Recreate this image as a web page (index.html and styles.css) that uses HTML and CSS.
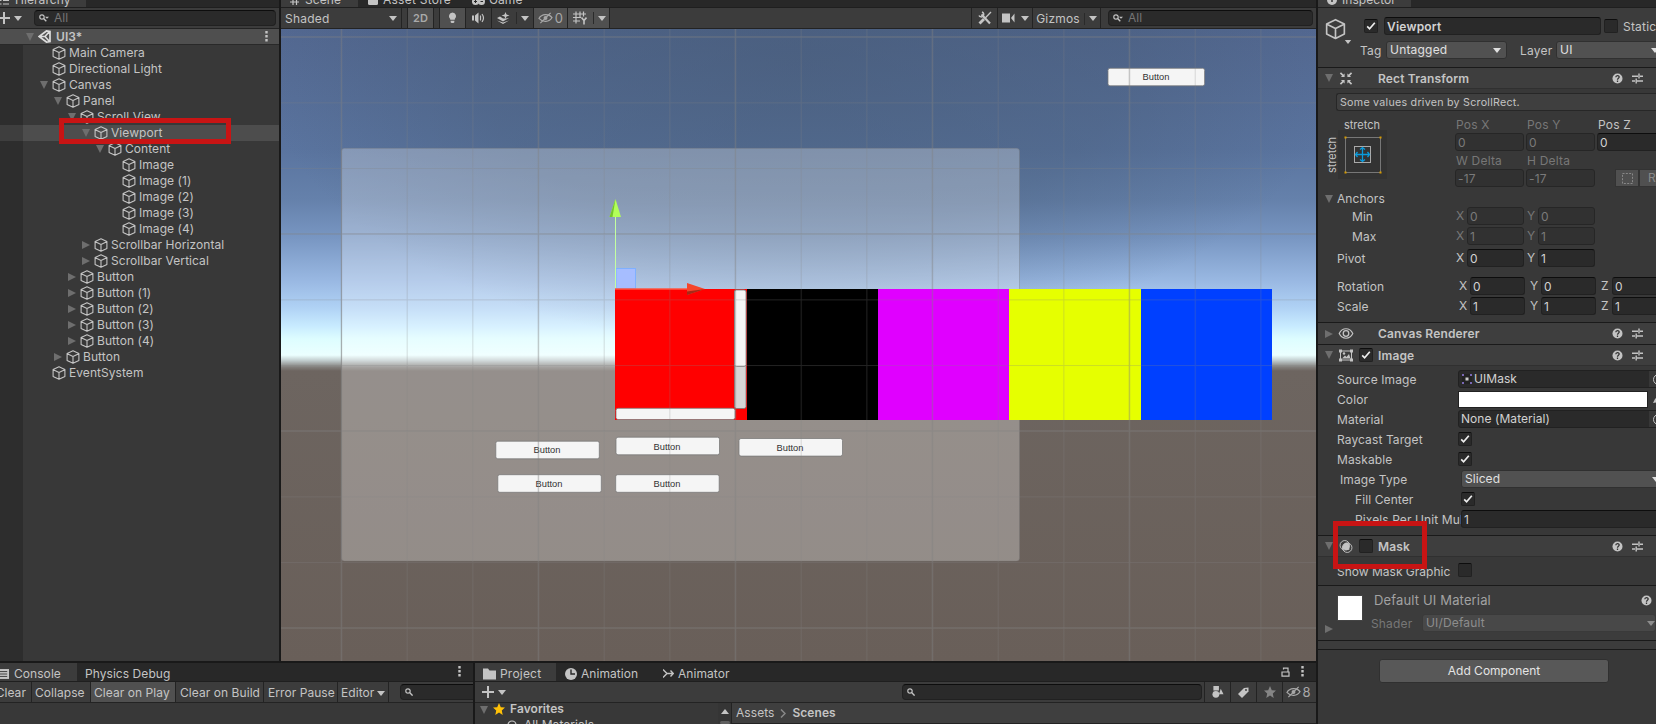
FILE: index.html
```html
<!DOCTYPE html>
<html lang="en">
<head>
<meta charset="utf-8">
<title>UI3 - Editor</title>
<link rel="stylesheet" href="styles.css">
</head>
<body>
<svg class="sprite" aria-hidden="true">
  <symbol id="cube" viewBox="0 0 14 14"><path d="M7 .8 12.9 3.6V10.4L7 13.3 1.1 10.4V3.6ZM1.3 3.8 7 6.6 12.7 3.8M7 6.6V13" fill="none" stroke="currentColor" stroke-width="1.1" stroke-linejoin="round"/></symbol>
  <symbol id="down" viewBox="0 0 8 8"><path d="M0 0H8L4 8Z" fill="currentColor"/></symbol>
  <symbol id="right" viewBox="0 0 8 8"><path d="M0 0V8L8 4Z" fill="currentColor"/></symbol>
  <symbol id="caret" viewBox="0 0 8 5"><path d="M0 0H8L4 5Z" fill="currentColor"/></symbol>
  <symbol id="dots" viewBox="0 0 3 11"><path d="M.3 0h2.4v2.4H.3ZM.3 4h2.4v2.4H.3ZM.3 8h2.4v2.4H.3Z" fill="currentColor"/></symbol>
  <symbol id="lock" viewBox="0 0 9 10"><path d="M1 5H8V9.2H1ZM7 5V1.2H2.5V2.5" fill="none" stroke="currentColor" stroke-width="1.2"/></symbol>
  <symbol id="plus" viewBox="0 0 12 12"><path d="M6 0V12M0 6H12" stroke="currentColor" stroke-width="2"/></symbol>
  <symbol id="find" viewBox="0 0 8 8"><circle cx="3" cy="3" r="2.2" fill="none" stroke="currentColor" stroke-width="1.2"/><path d="M4.6 4.6 7.6 7.6" stroke="currentColor" stroke-width="1.4"/></symbol>
  <symbol id="findm" viewBox="0 0 10 8"><circle cx="3" cy="3" r="2.2" fill="none" stroke="currentColor" stroke-width="1.2"/><path d="M4.6 4.6 7.3 7.3" stroke="currentColor" stroke-width="1.4"/><path d="M6 2.8H10L8 4.8Z" fill="currentColor"/></symbol>
  <symbol id="check" viewBox="0 0 10 10"><path d="M1.2 5.4 3.6 7.8 8.8 1.8" fill="none" stroke="currentColor" stroke-width="1.7"/></symbol>
  <symbol id="help" viewBox="0 0 11 11"><circle cx="5.5" cy="5.5" r="5" fill="#c4c4c4"/><path d="M3.8 4.3C3.8 2 7.2 2 7.2 4.1 7.2 5.3 5.5 5.3 5.5 6.8M5.5 7.6V8.9" fill="none" stroke="#333" stroke-width="1.3"/></symbol>
  <symbol id="preset" viewBox="0 0 11 11"><path d="M0 3.2H6M8 3.2H11M7 .5V5.6M0 8H3M5 8H11M4.2 5.4V10.6" fill="none" stroke="currentColor" stroke-width="1.4"/></symbol>
  <symbol id="hidden" viewBox="0 0 16 12"><path d="M1 6.5C4 1.5 11.500 1.200 15 5.500 12 10.500 5 11 1 6.500Z" fill="none" stroke="currentColor" stroke-width="1.3"/><circle cx="8" cy="6" r="2.1" fill="currentColor"/><path d="M2.500 11.500 13.500 .5" stroke="currentColor" stroke-width="1.300"/></symbol>
</svg>

<div class="editor">
  <div class="left">
    <div class="top">
      <section class="hierarchy">
        <div class="tabs cut">
          <div class="tab on h-tab"><svg class="i9" viewBox="0 0 9 10"><path d="M0 5.500H1.500M3 5.500H9M3 9H9M0 9H1.500" stroke="currentColor" stroke-width="1.200"/></svg><span>Hierarchy</span></div>
          <div class="tab-tools"><svg class="lock"><use href="#lock"/></svg><svg class="dots"><use href="#dots"/></svg></div>
        </div>
        <div class="bar h-bar"><svg class="plus"><use href="#plus"/></svg><svg class="caret"><use href="#caret"/></svg><div class="search"><svg class="findm"><use href="#findm"/></svg><span>All</span></div></div>
        <div class="scene-row"><svg class="fold"><use href="#down"/></svg><svg class="logo" viewBox="0 0 13 13"><path d="M12 1.500V11.500L8.500 12 1 6.500 8.500 1ZM1.500 6.500H7L11.500 1.500M7 6.500 11.500 11.500" fill="none" stroke="currentColor" stroke-width="1.700"/></svg><b>UI3*</b><svg class="dots"><use href="#dots"/></svg></div>
        <div class="tree">
          <div class="node d1"><i class="fold"></i><svg class="cube"><use href="#cube"/></svg>Main Camera</div>
          <div class="node d1"><i class="fold"></i><svg class="cube"><use href="#cube"/></svg>Directional Light</div>
          <div class="node d1"><svg class="fold"><use href="#down"/></svg><svg class="cube"><use href="#cube"/></svg>Canvas</div>
          <div class="node d2"><svg class="fold"><use href="#down"/></svg><svg class="cube"><use href="#cube"/></svg>Panel</div>
          <div class="node d3"><svg class="fold"><use href="#down"/></svg><svg class="cube"><use href="#cube"/></svg>Scroll View</div>
          <div class="node d4 sel"><svg class="fold"><use href="#down"/></svg><svg class="cube"><use href="#cube"/></svg>Viewport<span class="mark mark-node"></span></div>
          <div class="node d5"><svg class="fold"><use href="#down"/></svg><svg class="cube"><use href="#cube"/></svg>Content</div>
          <div class="node d6"><i class="fold"></i><svg class="cube"><use href="#cube"/></svg>Image</div>
          <div class="node d6"><i class="fold"></i><svg class="cube"><use href="#cube"/></svg>Image (1)</div>
          <div class="node d6"><i class="fold"></i><svg class="cube"><use href="#cube"/></svg>Image (2)</div>
          <div class="node d6"><i class="fold"></i><svg class="cube"><use href="#cube"/></svg>Image (3)</div>
          <div class="node d6"><i class="fold"></i><svg class="cube"><use href="#cube"/></svg>Image (4)</div>
          <div class="node d4"><svg class="fold"><use href="#right"/></svg><svg class="cube"><use href="#cube"/></svg>Scrollbar Horizontal</div>
          <div class="node d4"><svg class="fold"><use href="#right"/></svg><svg class="cube"><use href="#cube"/></svg>Scrollbar Vertical</div>
          <div class="node d3"><svg class="fold"><use href="#right"/></svg><svg class="cube"><use href="#cube"/></svg>Button</div>
          <div class="node d3"><svg class="fold"><use href="#right"/></svg><svg class="cube"><use href="#cube"/></svg>Button (1)</div>
          <div class="node d3"><svg class="fold"><use href="#right"/></svg><svg class="cube"><use href="#cube"/></svg>Button (2)</div>
          <div class="node d3"><svg class="fold"><use href="#right"/></svg><svg class="cube"><use href="#cube"/></svg>Button (3)</div>
          <div class="node d3"><svg class="fold"><use href="#right"/></svg><svg class="cube"><use href="#cube"/></svg>Button (4)</div>
          <div class="node d2"><svg class="fold"><use href="#right"/></svg><svg class="cube"><use href="#cube"/></svg>Button</div>
          <div class="node d1"><i class="fold"></i><svg class="cube"><use href="#cube"/></svg>EventSystem</div>
        </div>
      </section>

      <section class="scene">
        <div class="tabs cut">
          <div class="tab on s-tab"><svg class="i9" viewBox="0 0 9 10"><path d="M3 0V10M6.500 0V10M0 3H9M0 7H9" stroke="currentColor" stroke-width="1.200"/></svg><span>Scene</span></div>
          <div class="tab a-tab"><svg class="i10" viewBox="0 0 10 10"><rect width="10" height="10" rx="1.500" fill="currentColor"/></svg><span>Asset Store</span></div>
          <div class="tab g-tab"><svg class="i13" viewBox="0 0 13 10"><path d="M3.500 6.500H9.500" stroke="currentColor" stroke-width="4"/><circle cx="3.500" cy="6.500" r="3.500" fill="currentColor"/><circle cx="9.500" cy="6.500" r="3.500" fill="currentColor"/><path d="M3.500 5V8M2 6.500H5M8.500 6.500H11" stroke="#282828"/></svg><span>Game</span></div>
          <div class="tab-tools"><svg class="dots"><use href="#dots"/></svg></div>
        </div>
        <div class="bar s-bar">
          <div class="c shaded"><span>Shaded</span><svg class="caret"><use href="#caret"/></svg></div>
          <div class="c gap1"></div>
          <div class="c lit w26 two">2D</div>
          <div class="c gap1"></div>
          <div class="c lit w26"><svg class="i13" viewBox="0 0 13 13"><path d="M6.500 .5A4 4 0 0 1 9 7.500V8.500H4V7.500A4 4 0 0 1 6.500 .5ZM4.500 9.500H8.500V11L7.500 12H5.500L4.500 11Z" fill="currentColor"/></svg></div>
          <div class="c w26"><svg class="i13" viewBox="0 0 13 11"><path d="M0 3H2V8H0ZM3 3 6.500 0V11L3 8Z" fill="currentColor"/><path d="M8.500 3V8M10 1.500Q13 5.500 10 9.500" fill="none" stroke="currentColor" stroke-width="1.200"/></svg></div>
          <div class="c fx"><svg class="i13" viewBox="0 0 13 12"><path d="M0 6 3 4.500 6 6.500 9 6.500 12 6 6 9.500ZM0 8.500 6 10.500 12 8.500 6 12Z" fill="currentColor"/><path d="M8.500 0 9.500 2.500 12.500 3.500 9.500 4.500 8.500 7 7.500 4.500 4.500 3.500 7.500 2.500Z" fill="currentColor"/></svg><i></i><svg class="caret"><use href="#caret"/></svg></div>
          <div class="c lit eye"><svg class="hid"><use href="#hidden"/></svg><span>0</span></div>
          <div class="c lit fx grid-b"><svg class="i14" viewBox="0 0 14 13"><path d="M3 0V12M7 0V6M10.500 0V5M0 2.500H13M0 6H8M0 9.500H7" stroke="currentColor" stroke-width="1.200"/><path d="M8.500 6 11 9 13.500 6M11 9V13" fill="none" stroke="currentColor" stroke-width="1.600"/></svg><i></i><svg class="caret"><use href="#caret"/></svg></div>
          <div class="grow"></div>
          <div class="c tools"><svg class="i14" viewBox="0 0 14 14"><path d="M3.500 3.500 12 12.500" stroke="currentColor" stroke-width="2.200"/><path d="M1 4.500A2.500 2.500 0 1 0 4 1" fill="none" stroke="currentColor" stroke-width="1.500"/><path d="M13 1 7 7.300" stroke="currentColor" stroke-width="1.300"/><path d="M6 8 1.500 12.500" stroke="currentColor" stroke-width="2.800"/></svg></div>
          <div class="c cam"><svg class="i13" viewBox="0 0 13 9"><path d="M0 0H8V9H0ZM9 4.500 12.500 0V9Z" fill="currentColor"/></svg><svg class="caret"><use href="#caret"/></svg></div>
          <div class="c giz"><span>Gizmos</span><i></i><svg class="caret"><use href="#caret"/></svg></div>
          <div class="search"><svg class="findm"><use href="#findm"/></svg><span>All</span></div>
        </div>
        <svg class="view" viewBox="281 29 1035 632">
          <defs>
            <linearGradient id="sky" gradientUnits="userSpaceOnUse" x1="0" y1="29" x2="0" y2="661">
              <stop offset="0" stop-color="#536891"/><stop offset=".19" stop-color="#5a749f"/><stop offset=".27" stop-color="#6581ab"/><stop offset=".33" stop-color="#7896c2"/><stop offset=".4" stop-color="#9ab9e3"/><stop offset=".44" stop-color="#afd1f4"/><stop offset=".47" stop-color="#c8ebff"/><stop offset=".49" stop-color="#ddfdff"/><stop offset=".516" stop-color="#ebffff"/><stop offset=".524" stop-color="#c4d0d1"/><stop offset=".535" stop-color="#827f7c"/><stop offset=".541" stop-color="#6d6560"/><stop offset="1" stop-color="#695f59"/>
            </linearGradient>
            <radialGradient id="depth" gradientUnits="userSpaceOnUse" cx="0" cy="0" r="1" gradientTransform="translate(800 60) scale(540 290)"><stop offset="0" stop-color="#42566e" stop-opacity=".5"/><stop offset=".6" stop-color="#42566e" stop-opacity=".32"/><stop offset="1" stop-color="#42566e" stop-opacity="0"/></radialGradient>
            <pattern id="gthin" patternUnits="userSpaceOnUse" x="341" y="36.700" width="65.670" height="65.670"><path d="M.5 0V65.670M0 .5H65.670" stroke="#808080" stroke-opacity=".27"/></pattern>
            <pattern id="gbold" patternUnits="userSpaceOnUse" x="340.500" y="36" width="197" height="197"><path d="M.8 0V197M0 .8H197" stroke="#808080" stroke-opacity=".26" stroke-width="1.600"/></pattern>
          </defs>
          <rect x="281" y="29" width="1035" height="632" fill="url(#sky)"/>
          <rect x="281" y="29" width="1035" height="332" fill="url(#depth)"/>
          <rect x="341.500" y="148.300" width="678" height="412.700" rx="3" fill="#fff" fill-opacity=".28" stroke="#777" stroke-opacity=".35"/>
          <rect x="616" y="268.500" width="19.500" height="20" fill="#a6bdff" stroke="#7fb0ff"/>
          <g shape-rendering="crispEdges">
            <rect x="615" y="289" width="132" height="131" fill="#f00"/><rect x="747" y="289" width="131" height="131"/><rect x="878" y="289" width="131" height="131" fill="#e000ff"/><rect x="1009" y="289" width="132" height="131" fill="#e6ff00"/><rect x="1141" y="289" width="131" height="131" fill="#0040ff"/>
          </g>
          <g stroke="#777" stroke-opacity=".75" fill="#f5f5f5">
            <rect x="734.500" y="290" width="11.500" height="118.500" rx="2" fill="#d6d6d6"/><rect x="734.500" y="290" width="11.500" height="76.500" rx="2"/>
            <rect x="616" y="408.300" width="119" height="11.200" rx="2"/>
            <rect x="1108" y="68.300" width="96.600" height="17.500" rx="2"/>
            <rect x="495.800" y="441.200" width="103.500" height="17.600" rx="2"/><rect x="616" y="437.200" width="103.500" height="17.600" rx="2"/><rect x="739" y="438.500" width="103.500" height="17.600" rx="2"/>
            <rect x="497.800" y="474.700" width="103.500" height="17.600" rx="2"/><rect x="615.700" y="474.700" width="103.500" height="17.600" rx="2"/>
          </g>
          <g class="ui-text"><text x="1156" y="80.300">Button</text><text x="547" y="453.300">Button</text><text x="667" y="449.600">Button</text><text x="790" y="451">Button</text><text x="549" y="487">Button</text><text x="667" y="487">Button</text></g>
          <rect x="281" y="29" width="1035" height="632" fill="url(#gthin)"/>
          <rect x="281" y="29" width="1035" height="632" fill="url(#gbold)"/>
          <path d="M615.500 217V288" stroke="#c3ffa0"/><path d="M615.500 199 621 217H609.500Z" fill="#b2ff59"/><path d="M609.500 217 615.500 199 612.500 217Z" fill="#74c52c"/>
          <path d="M615 289H687" stroke="#ff5640" stroke-width="1.500"/><path d="M687 283V295L705 289Z" fill="#f6452b"/><path d="M687 291.500V295L705 289Z" fill="#a52a18"/>
        </svg>
      </section>
    </div>

    <div class="bottom">
      <section class="console">
        <div class="tabs"><div class="tab on c-tab"><svg class="i10" viewBox="0 0 10 11"><path d="M0 0H10V11H0Z" fill="currentColor"/><path d="M0 2.800H8M0 5.500H8M0 8.200H8" stroke="#333"/></svg><span>Console</span></div><div class="tab p-tab">Physics Debug</div><div class="tab-tools"><svg class="dots"><use href="#dots"/></svg></div></div>
        <div class="bar c-bar"><div class="c clr">Clear</div><div class="c col">Collapse</div><div class="c cop lit">Clear on Play</div><div class="c cob">Clear on Build</div><div class="c err">Error Pause</div><div class="c edt">Editor<svg class="caret"><use href="#caret"/></svg></div><div class="search"><svg class="find"><use href="#find"/></svg></div></div>
      </section>
      <section class="project">
        <div class="tabs"><div class="tab on pr-tab"><svg class="i13" viewBox="0 0 13 11"><path d="M0 0H5L6.500 2H13V11H0Z" fill="currentColor"/></svg><span>Project</span></div><div class="tab an-tab"><svg class="i12" viewBox="0 0 12 12"><circle cx="6" cy="6" r="6" fill="currentColor"/><path d="M6 1.500V6H10" fill="none" stroke="#282828" stroke-width="1.400"/></svg><span>Animation</span></div><div class="tab am-tab"><svg class="i11" viewBox="0 0 11 10"><path d="M0 1 4 5H10M0 9 4 5M7.500 2 10.300 5 7.500 8" fill="none" stroke="currentColor" stroke-width="1.400"/></svg><span>Animator</span></div><div class="tab-tools"><svg class="lock"><use href="#lock"/></svg><svg class="dots"><use href="#dots"/></svg></div></div>
        <div class="bar p-bar"><svg class="plus"><use href="#plus"/></svg><svg class="caret"><use href="#caret"/></svg><div class="search"><svg class="find"><use href="#find"/></svg></div>
          <div class="c w26"><svg class="i12" viewBox="0 0 12 13"><path d="M1 0H7V5H1ZM9 3 12 9H7Z" fill="currentColor"/><circle cx="3.700" cy="9" r="3.700" fill="currentColor"/></svg></div><div class="c w26"><svg class="i11" viewBox="0 0 11 11"><path d="M6 1 10.500 .5 10.500 4.500 4 11 0 7Z" fill="currentColor"/><circle cx="8" cy="3" r=".9" fill="#333"/></svg></div><div class="c w26 dim"><svg class="i12" viewBox="0 0 12 12"><path d="M6 0 7.800 4.200 12 4.600 8.800 7.500 9.700 12 6 9.500 2.300 12 3.200 7.500 0 4.600 4.200 4.200Z" fill="currentColor"/></svg></div><div class="c hid8"><svg class="hid"><use href="#hidden"/></svg><span>8</span></div></div>
        <div class="p-body"><div class="favs"><div class="fav-list"><div class="fav"><svg class="fold"><use href="#down"/></svg><svg class="star" viewBox="0 0 12 12"><path d="M6 0 7.800 4.200 12 4.600 8.800 7.500 9.700 12 6 9.500 2.300 12 3.200 7.500 0 4.600 4.200 4.200Z" fill="#ffc107"/></svg><b>Favorites</b></div><div class="fav sub"><svg class="i10" viewBox="0 0 10 10"><circle cx="5" cy="5" r="4" fill="none" stroke="currentColor" stroke-width="1.200"/></svg><span>All Materials</span></div></div><div class="scroll"><svg class="up" viewBox="0 0 8 5"><path d="M0 5H8L4 0Z" fill="currentColor"/></svg><i></i></div></div>
          <div class="crumbs"><span>Assets</span><svg class="chev" viewBox="0 0 6 9"><path d="M1 .5 5 4.500 1 8.500" fill="none" stroke="currentColor" stroke-width="1.500"/></svg><b>Scenes</b></div></div>
      </section>
    </div>
  </div>

  <aside class="inspector">
    <div class="tabs cut"><div class="tab on in-tab"><svg class="i10" viewBox="0 0 10 10"><circle cx="5" cy="5" r="5" fill="currentColor"/><path d="M5 2V7" stroke="#333" stroke-width="1.500"/></svg><span>Inspector</span></div><div class="tab-tools"><svg class="lock"><use href="#lock"/></svg></div></div>
    <div class="object">
      <div class="obj-icon"><svg class="bigcube"><use href="#cube"/></svg><svg class="caret"><use href="#caret"/></svg></div>
      <div class="obj-main">
        <div class="obj-row"><span class="box"><svg><use href="#check"/></svg></span><span class="field name"><b>Viewport</b></span><span class="box"></span><span class="static">Static</span></div>
        <div class="obj-row two-row"><span class="tag">Tag</span><span class="drop tagd">Untagged<svg class="caret"><use href="#caret"/></svg></span><span class="layer">Layer</span><span class="drop layd">UI<svg class="caret"><use href="#caret"/></svg></span></div>
      </div>
    </div>

    <div class="head"><svg class="fold"><use href="#down"/></svg><svg class="hi" viewBox="0 0 14 14"><path d="M1 1 4 4M13 1 10 4M1 13 4 10M13 13 10 10" stroke="currentColor" stroke-width="1.800"/><path d="M5.500 1.500V5.500H1.500ZM8.500 1.500V5.500H12.500ZM5.500 12.500V8.500H1.500ZM8.500 12.500V8.500H12.500Z" fill="currentColor"/></svg><b>Rect Transform</b><svg class="help"><use href="#help"/></svg><svg class="preset"><use href="#preset"/></svg></div>
    <div class="note">Some values driven by ScrollRect.</div>
    <div class="rect">
      <div class="anchor"><span class="st-top">stretch</span><span class="st-side">stretch</span>
        <svg class="anchor-box" viewBox="0 0 49 49"><rect width="49" height="49" fill="#333"/><rect x="7.500" y="7.500" width="35" height="35" fill="none" stroke="#777"/><rect x="16.500" y="16.500" width="16" height="16" fill="none" stroke="#aaa"/><path d="M18 24.500H31M24.500 18V31M19.500 22 17.500 24.500 19.500 27M29.500 22 31.500 24.500 29.500 27M22 19.500 24.500 17.500 27 19.500M22 29.500 24.500 31.500 27 29.500" fill="none" stroke="#0a9bdc" stroke-width="1.300"/><path d="M6.500 6.500h2v2h-2ZM41.500 6.500h2v2h-2ZM6.500 41.500h2v2h-2ZM41.500 41.500h2v2h-2Z" fill="#d89b00"/></svg>
      </div>
      <div class="pos">
        <span class="off">Pos X</span><span class="off">Pos Y</span><span class="pz">Pos Z</span>
        <span class="field dis">0</span><span class="field dis">0</span><span class="field">0</span>
        <span class="off">W Delta</span><span class="off">H Delta</span><span></span>
        <span class="field dis">-17</span><span class="field dis">-17</span>
        <span class="modes"><span class="m1"><svg viewBox="0 0 11 11"><path d="M.5 .5H10.500V10.500H.5Z" fill="none" stroke="currentColor" stroke-dasharray="2 1.330"/></svg></span><span class="m2">R</span></span>
      </div>
    </div>
    <div class="line anchors"><svg class="fold"><use href="#down"/></svg>Anchors</div>
    <div class="line ind"><span class="lab">Min</span><div class="xy off"><span>X</span><span class="field dis">0</span><span>Y</span><span class="field dis">0</span></div></div>
    <div class="line ind"><span class="lab">Max</span><div class="xy off"><span>X</span><span class="field dis">1</span><span>Y</span><span class="field dis">1</span></div></div>
    <div class="line pivot"><span class="lab">Pivot</span><div class="xy"><span>X</span><span class="field">0</span><span>Y</span><span class="field">1</span></div></div>
    <div class="line rot"><span class="lab">Rotation</span><div class="xyz"><span>X</span><span class="field">0</span><span>Y</span><span class="field">0</span><span>Z</span><span class="field">0</span></div></div>
    <div class="line scl"><span class="lab">Scale</span><div class="xyz"><span>X</span><span class="field">1</span><span>Y</span><span class="field">1</span><span>Z</span><span class="field">1</span></div></div>

    <div class="head closed"><svg class="fold"><use href="#right"/></svg><svg class="hi wide" viewBox="0 0 16 14"><path d="M.7 7C4 .2 12 .2 15.300 7 12 13.800 4 13.800 .7 7Z" fill="none" stroke="currentColor" stroke-width="1.300"/><circle cx="8" cy="7" r="3" fill="none" stroke="currentColor" stroke-width="1.400"/></svg><b>Canvas Renderer</b><svg class="help"><use href="#help"/></svg><svg class="preset"><use href="#preset"/></svg></div>
    <div class="head"><svg class="fold"><use href="#down"/></svg><svg class="hi" viewBox="0 0 14 12"><path d="M1.500 1.500H12.500V10.500H1.500Z" fill="none" stroke="currentColor"/><path d="M0 0H3V3H0ZM11 0H14V3H11ZM0 9H3V12H0ZM11 9H14V12H11ZM3 9 6 6 7.500 7.500 10 4.500 11.500 9Z" fill="currentColor"/><circle cx="5" cy="4" r="1.200" fill="currentColor"/></svg><span class="box"><svg><use href="#check"/></svg></span><b>Image</b><svg class="help"><use href="#help"/></svg><svg class="preset"><use href="#preset"/></svg></div>
    <div class="props">
      <div class="prop"><span class="lab">Source Image</span><span class="obj"><svg class="mini" viewBox="0 0 10 10"><rect width="10" height="10" fill="#222"/><path d="M0 0H2V2H0ZM8 0H10V2H8ZM0 8H2V10H0ZM8 8H10V10H8Z" fill="#7a68b5"/><path d="M3.500 3.500H6.500V6.500H3.500Z" fill="#ccc"/></svg>UIMask<i class="pick"></i></span></div>
      <div class="prop"><span class="lab">Color</span><span class="white"></span><svg class="drop-ic" viewBox="0 0 8 8"><path d="M0 8 2 4 5 1 8 4 5 7Z" fill="currentColor"/></svg></div>
      <div class="prop"><span class="lab">Material</span><span class="obj none">None (Material)<i class="pick"></i></span></div>
      <div class="prop"><span class="lab">Raycast Target</span><span class="box"><svg><use href="#check"/></svg></span></div>
      <div class="prop"><span class="lab">Maskable</span><span class="box"><svg><use href="#check"/></svg></span></div>
      <div class="prop p1"><span class="lab">Image Type</span><span class="drop sliced">Sliced<svg class="caret"><use href="#caret"/></svg></span></div>
      <div class="prop p2"><span class="lab">Fill Center</span><span class="box"><svg><use href="#check"/></svg></span></div>
      <div class="prop p2"><span class="lab">Pixels Per Unit Mul</span><span class="field ppu">1</span></div>
    </div>
    <div class="head mask"><span class="mark mark-mask"></span><svg class="fold"><use href="#down"/></svg><svg class="hi" viewBox="0 0 14 14"><circle cx="5.700" cy="5.700" r="5.100" fill="none" stroke="currentColor"/><circle cx="8.300" cy="8.300" r="5.100" fill="none" stroke="currentColor"/><path d="M3.400 9.800A5 5 0 0 1 9.800 3.400Q11.500 6 10.600 10.600 6 11.500 3.400 9.800Z" fill="currentColor"/></svg><span class="box"></span><b>Mask</b><svg class="help"><use href="#help"/></svg><svg class="preset"><use href="#preset"/></svg></div>
    <div class="prop show"><span class="lab">Show Mask Graphic</span><span class="box"></span></div>
    <div class="material">
      <div class="mat-left"><span class="swatch"></span><svg class="fold"><use href="#right"/></svg></div>
      <div class="mat-main"><div class="mat-title"><span>Default UI Material</span><svg class="help"><use href="#help"/></svg></div><div class="mat-sh"><span>Shader</span><span class="drop">UI/Default<svg class="caret"><use href="#caret"/></svg></span></div></div>
    </div>
    <div class="strip"></div>
    <div class="add"><button>Add Component</button></div>
  </aside>
</div>
</body>
</html>
```

FILE: styles.css
```css
* { box-sizing: border-box; }
body { margin: 0; width: 1656px; height: 724px; overflow: hidden; background: #191919; color: #c4c4c4; font: 12px/14px Inter, "Liberation Sans", sans-serif; letter-spacing: .06px; white-space: nowrap; }
svg { display: block; flex: none; }
b { font-weight: 600; }
.sprite { display: none; }
.editor { display: flex; gap: 2px; width: 1656px; height: 724px; }
.left { width: 1316px; flex: none; display: flex; flex-direction: column; gap: 2px; }
.top { display: flex; gap: 2px; height: 661px; }
.bottom { display: flex; gap: 2px; height: 61px; }
section, aside { overflow: hidden; background: #383838; flex: none; }

/* icon sizes */
.i9 { width: 9px; height: 10px; } .i10 { width: 10px; height: 10px; } .i11 { width: 11px; height: 11px; } .i12 { width: 12px; height: 12px; } .i13 { width: 13px; height: 12px; } .i14 { width: 14px; height: 14px; }
.caret { width: 8px; height: 5px; } .dots { width: 3px; height: 11px; } .lock { width: 9px; height: 10px; } .plus { width: 12px; height: 12px; }
.find { width: 8px; height: 8px; } .findm { width: 10px; height: 8px; } .cube { width: 14px; height: 14px; } .fold { width: 8px; height: 8px; color: #6e6e6e; flex: none; } .hid { width: 15px; height: 12px; }

/* tabs */
.tabs { display: flex; height: 19px; background: #282828; border-bottom: 1px solid #1f1f1f; align-items: flex-end; }
.tabs.cut { height: 8px; overflow: hidden; }
.tab { height: 19px; padding-top: 4px; display: flex; align-items: center; flex: none; }
.cut .tab { height: 15px; padding-top: 0; }
.tab.on { background: #3c3c3c; }
.tab-tools { margin-left: auto; display: flex; align-items: center; height: 19px; }
.h-tab { width: 86px; gap: 6px; } .s-tab { width: 77px; padding-left: 9px; gap: 6px; } .a-tab { width: 104px; padding-left: 10px; gap: 5px; letter-spacing: .25px; } .g-tab { padding-left: 10px; gap: 4px; }
.in-tab { width: 93px; padding-left: 9px; gap: 5px; }
.cut .tab-tools { padding-bottom: 7px; }
.hierarchy .tab-tools { gap: 11px; padding-right: 12px; }
.scene .tab-tools { padding-right: 12px; }
.inspector .tab-tools { padding-right: 10px; }
.c-tab { width: 77px; gap: 5px; } .c-tab svg { width: 9px; }
.p-tab { padding-left: 8px; }
.console .tab-tools { padding-right: 12px; }
.pr-tab { width: 81px; padding-left: 8px; gap: 4px; letter-spacing: .2px; } .an-tab { width: 107px; padding-left: 9px; gap: 4px; } .am-tab { gap: 4px; }
.project .tab-tools { gap: 11px; padding-right: 12px; }

/* toolbars */
.bar { display: flex; height: 21px; align-items: center; background: #3c3c3c; border-bottom: 1px solid #232323; }
.search { height: 16px; background: #2a2a2a; border: 1px solid #212121; border-top-color: #0d0d0d; border-radius: 4px; display: flex; align-items: center; padding-left: 4px; gap: 5px; color: #c4c4c4; }
.search span { color: #757575; }
.c { height: 20px; display: flex; align-items: center; justify-content: center; border-right: 1px solid #232323; flex: none; }
.lit { background: #505050; }
.grow { flex: 1; }
.w26 { width: 26px; }
.h-bar .caret { margin: 0 12px 0 4px; } .h-bar .plus { margin-left: -2px; } .h-bar .search { width: 242px; }
.shaded { width: 121px; justify-content: space-between; padding: 1px 4px 0; letter-spacing: .2px; }
.gap1 { width: 6px; } .two { font-size: 11px; font-weight: 600; color: #aaa; letter-spacing: 0; }
.fx { width: 42px; justify-content: flex-start; padding-left: 5px; } .fx i { width: 1px; height: 12px; background: #2a2a2a; margin: 0 4px 0 6px; }
.eye { width: 34px; gap: 2px; color: #a8a8a8; font-size: 13px; }
.tools { border-left: 1px solid #232323; width: 27px; }
.cam { width: 35px; gap: 6px; } .giz { width: 68px; gap: 4px; padding-top: 1px; letter-spacing: .2px; } .giz i { width: 1px; height: 12px; background: #2a2a2a; }
.s-bar .search { width: 205px; margin: 0 3px 0 7px; }

/* hierarchy */
.hierarchy { width: 279px; }
.scene-row { display: flex; align-items: center; height: 16px; padding: 0 11px 0 26px; background: #4f4f4f; border-bottom: 1px solid #292929; }
.scene-row .logo { width: 13px; height: 13px; margin: 0 5px 0 4px; color: #ddd; } .scene-row .dots { margin-left: auto; }
.tree { height: 616px; background: linear-gradient(90deg, #2d2d2d 23px, #383838 23px); }
.node { display: flex; align-items: center; height: 16px; position: relative; }
.node .cube { margin: 0 4px 0 4px; }
.d1 { padding-left: 40px; } .d2 { padding-left: 54px; } .d3 { padding-left: 68px; } .d4 { padding-left: 82px; } .d5 { padding-left: 96px; } .d6 { padding-left: 110px; }
.node .cube { margin-right: 3px; }
.sel { background: linear-gradient(90deg, #3e3e3e 23px, #4d4d4d 23px); z-index: 1; }
.mark { position: absolute; border: 5px solid #c81414; z-index: 5; }
.mark-node { left: 59px; top: -7px; width: 172px; height: 26px; }
.mark-mask { left: 15px; top: -15px; width: 94px; height: 48px; }

/* scene */
.scene { width: 1035px; }
.view { width: 1035px; height: 632px; }
.ui-text { font: 9.3px "Liberation Sans", sans-serif; letter-spacing: 0; text-anchor: middle; fill: #323232; }

/* console and project */
.console { width: 473px; }
.c-bar .c { justify-content: flex-start; padding: 2px 0 0 3px; }
.c-bar .clr { width: 32px; padding-right: 5px; justify-content: flex-end; } .c-bar .col { width: 59px; } .c-bar .cop { width: 85px; } .c-bar .cob { width: 88px; padding-left: 4px; } .c-bar .err { width: 74px; padding-left: 4px; } .c-bar .edt { width: 51px; gap: 3px; }
.c-bar .search { margin-left: 11px; flex: 1; border-radius: 4px 0 0 4px; border-right: 0; }
.project { width: 841px; }
.p-bar .plus { margin-left: 7px; } .p-bar .caret { margin-left: 4px; } .p-bar .search { margin-left: 396px; width: 300px; margin-right: 2px; }
.p-bar .search + .c { border-left: 1px solid #232323; width: 27px; }
.dim { color: #858585; } .p-bar .hid8 { border: 0; width: 33px; gap: 1px; font-size: 13px; color: #a8a8a8; padding-right: 2px; }
.p-body { display: flex; height: 21px; }
.favs { width: 257px; display: flex; border-right: 1px solid #232323; justify-content: space-between; }
.fav { display: flex; align-items: center; height: 16px; padding-left: 5px; margin-top: -2px; } .fav .fold { margin-top: 1px; }
.fav .star { width: 12px; height: 12px; margin: 0 5px; }
.fav.sub { margin-top: 0; padding-left: 32px; gap: 7px; }
.scroll { width: 13px; display: flex; flex-direction: column; align-items: center; background: #353535; padding-top: 6px; gap: 7px; } .scroll .up { width: 8px; height: 5px; } .scroll i { width: 10px; height: 10px; border-radius: 5px; background: #5f5f5f; }
.crumbs { flex: 1; height: 21px; border-bottom: 1px solid #232323; display: flex; align-items: center; background: #3f3f3f; padding-left: 4px; gap: 6px; } .chev { width: 6px; height: 9px; color: #888; }

/* inspector */
.inspector { width: 338px; height: 724px; }
.box { width: 14px; height: 14px; flex: none; background: #2a2a2a; border: 1px solid #212121; border-top-color: #0d0d0d; border-radius: 2px; display: flex; align-items: center; justify-content: center; color: #eee; }
.box svg { width: 10px; height: 10px; }
.field { height: 18px; flex: none; background: #2a2a2a; border: 1px solid #212121; border-top-color: #0d0d0d; border-radius: 3px; padding-left: 2px; line-height: 17px; color: #d2d2d2; }
.field.dis { background: #313131; border-color: #262626; color: #7a7a7a; }
.off { color: #777; }
.drop { height: 18px; flex: none; background: #515151; border: 1px solid #303030; border-radius: 3px; display: flex; align-items: center; justify-content: space-between; padding: 0 5px 0 3px; color: #e0e0e0; }
.object { display: flex; height: 59px; background: #3c3c3c; padding-top: 9px; }
.obj-icon { width: 46px; flex: none; padding: 1px 0 0 7px; } .bigcube { width: 21px; height: 22px; } .obj-icon .caret { margin: 0 0 0 19px; height: 4px; }
.obj-main { display: flex; flex: none; flex-direction: column; gap: 6px; }
.obj-row { display: flex; height: 18px; align-items: center; }
.name { width: 217px; margin: 0 3px 0 6px; line-height: 18px; letter-spacing: .2px; } .static { margin-left: 5px; padding-top: 1px; letter-spacing: .2px; }
.two-row { margin-left: -4px; letter-spacing: .2px; }
.tag { width: 26px; padding-top: 1px; } .tagd { width: 121px; } .layer { margin-left: 13px; width: 36px; padding-top: 1px; } .layd { width: 109px; }
.head { display: flex; align-items: center; height: 22px; background: #3e3e3e; border-top: 1px solid #1a1a1a; border-bottom: 1px solid #303030; padding-left: 7px; position: relative; }
.head .fold { margin-right: 6px; } .hi { width: 14px; height: 13px; margin-right: 6px; } .hi.wide { width: 16px; margin: 0 5px 0 -1px; }
.head .box { margin-right: -14px; } .head b { margin-left: 19px; padding-top: 1px; letter-spacing: .15px; }
.help { width: 11px; height: 11px; } .preset { width: 11px; height: 11px; }
.head .help { margin-left: auto; } .head .preset { margin: 0 13px 0 9px; }
.note { height: 18px; margin: 4px 0 0 18px; border: 1px solid #272727; border-right: 0; border-radius: 3px 0 0 3px; background: #3f3f3f; padding-left: 3px; font-size: 10.700px; line-height: 18px; letter-spacing: .25px; }
.rect { display: flex; height: 76px; margin-top: 6px; }
.anchor { width: 137px; flex: none; display: grid; grid-template: 13px 49px / 8px 49px; padding-left: 10px; column-gap: 3px; height: 62px; }
.st-top { grid-column: 2; font-size: 11px; text-align: center; line-height: 16px; letter-spacing: 0; margin-left: -3px; } .st-side { writing-mode: vertical-rl; transform: rotate(180deg); font-size: 11px; letter-spacing: 0; text-align: center; line-height: 8px; }
.anchor-box { width: 49px; height: 49px; margin-left: -1px; }
.pos { display: grid; flex: none; grid-template: 16px 18px 18px 18px / 69px 69px 70px; column-gap: 2px; letter-spacing: .2px; } .pos > .off, .pz { padding: 1px 0 0 1px; } .pos > .off:nth-of-type(n+7) { padding-top: 3px; }
.modes { display: flex; margin-left: 18px; color: #888; } .modes span { height: 18px; flex: none; background: #505050; border: 1px solid #333; display: flex; align-items: center; } .modes .m1 { width: 24px; justify-content: center; } .m1 svg { width: 11px; height: 11px; } .modes .m2 { width: 30px; padding-left: 8px; }
.line { display: flex; align-items: center; height: 20px; padding-left: 19px; }
.anchors { height: 14px; margin: -1px 0 0; padding-left: 7px; gap: 4px; }
.line .lab { width: 119px; flex: none; padding-top: 1px; } .line.ind { padding-left: 34px; } .line.ind .lab { width: 104px; }
.xy, .xyz { display: grid; align-items: center; } .xy { grid-template-columns: 11px 60px 11px 57px; } .xy .field:nth-child(2) { width: 57px; }
.xyz { grid-template-columns: 11px 60px 11px 60px 11px 55px; margin-left: 3px; } .xyz .field { width: 55px; }
.pivot { margin-top: 2px; } .rot { margin-top: 8px; } .scl { margin-bottom: 6px; }
.closed { border-bottom: 0; }
.props { padding-top: 3px; height: 169px; }
.prop { display: flex; align-items: center; height: 20px; padding-left: 19px; } .prop .lab { width: 121px; flex: none; padding-top: 1px; letter-spacing: .1px; }
.obj { width: 210px; flex: none; height: 18px; background: #2a2a2a; border: 1px solid #212121; border-radius: 3px; display: flex; align-items: center; padding-left: 3px; gap: 2px; color: #d2d2d2; } .mini { width: 10px; height: 10px; } .obj.none { padding-left: 2px; }
.pick { width: 18px; height: 16px; margin-left: auto; background: #373737; display: flex; align-items: center; padding-left: 4px; } .pick::before { content: ""; width: 9px; height: 9px; border: 1px solid #c4c4c4; border-radius: 50%; }
.white { width: 190px; flex: none; height: 17px; background: #fff; border: 1px solid #212121; } .drop-ic { width: 8px; height: 8px; margin-left: 5px; }
.prop.p1 { padding-left: 22px; } .prop.p2 { padding-left: 37px; } .p2 .lab { width: 105px; margin-right: 1px; } .prop.p2 .lab { width: 105px; } .sliced { width: 205px; } .ppu { width: 210px; }
.show { height: 28px; padding-bottom: 2px; } .prop.show .lab { letter-spacing: 0; padding-top: 3px; }
.prop.show { height: 28px; }
.material { height: 56px; border-top: 1px solid #1a1a1a; border-bottom: 1px solid #1a1a1a; background: #3c3c3c; display: flex; }
.mat-left { width: 53px; flex: none; padding-left: 7px; } .swatch { display: block; width: 26px; height: 26px; margin: 9px 0 4px 12px; background: #fff; border: 1px solid #444; } .mat-left .fold { margin-top: 1px; }
.mat-main { flex: 1; padding-top: 6px; color: #777; letter-spacing: .15px; } .mat-title { display: flex; justify-content: space-between; align-items: center; height: 16px; padding: 0 4px 0 3px; font-size: 13px; color: #a2a2a2; }
.mat-sh { display: flex; align-items: center; height: 18px; margin-top: 6px; } .mat-sh > span:first-child { width: 51px; padding-top: 1px; } .mat-sh .drop { flex: 1; background: #484848; border-color: #3a3a3a; color: #8d8d8d; padding-right: 0; }
.strip { height: 9px; background: #3c3c3c; border-bottom: 1px solid #1a1a1a; }
.add { padding: 9px 0 0 61px; } .add button { width: 230px; height: 24px; background: #585858; border: 1px solid #303030; border-radius: 3px; color: #e4e4e4; font: inherit; letter-spacing: 0; padding: 0 0 1px; }
```
